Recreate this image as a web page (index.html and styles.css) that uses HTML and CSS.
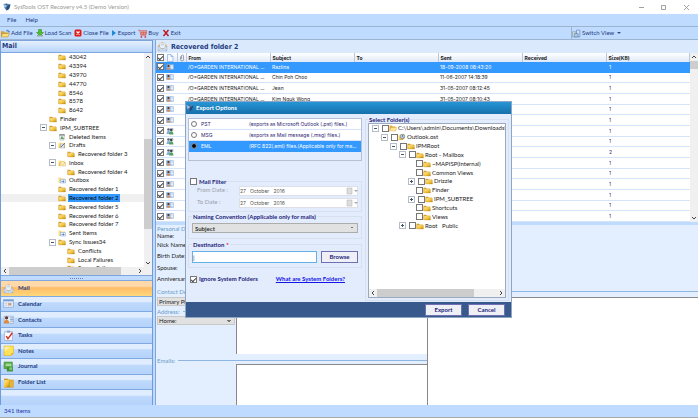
FILE: index.html
```html
<!DOCTYPE html>
<html lang="en">
<head>
<meta charset="utf-8">
<title>SysTools OST Recovery v4.5 (Demo Version)</title>
<link rel="stylesheet" href="styles.css">
</head>
<body>
<svg width="0" height="0" class="defs" aria-hidden="true">
  <defs>
    <linearGradient id="gold" x1="0" y1="0" x2="1" y2="1"><stop offset="0" stop-color="#fff0a0"/><stop offset=".55" stop-color="#f3c43c"/><stop offset="1" stop-color="#b98212"/></linearGradient>
    <linearGradient id="blue" x1="0" y1="0" x2="1" y2="0"><stop offset="0" stop-color="#7fa6d8"/><stop offset="1" stop-color="#d3e4f8"/></linearGradient>
    <symbol id="folder" viewBox="0 0 16 14"><path d="M1 2.5h5l1.5 2H14v8.500H1z" fill="#d9a02a"/><path d="M2 5h12.500l.5 8H2z" fill="url(#gold)" stroke="#c4912a" stroke-width=".6"/></symbol>
    <symbol id="open" viewBox="0 0 16 14"><path d="M1 2h5l1.500 2H13v9H1z" fill="#e3ae3c"/><path d="M4 6h12l-3 7H1z" fill="#ffe696" stroke="#c4912a" stroke-width=".6"/></symbol>
    <symbol id="addfile" viewBox="0 0 16 14"><path d="M0 3h5l1.500 2H12v8H0z" fill="#d9a02a"/><path d="M3 7h12l-3 6H0z" fill="#ffe07a" stroke="#a87518" stroke-width=".8"/><path d="M9 3c2-3 5-2 5 1M12 3l2 2 2-2" fill="none" stroke="#2d5fae" stroke-width="1.400"/></symbol>
    <symbol id="trash" viewBox="0 0 16 14"><path d="M3 2h10l-1 11H4z" fill="#f4f8f4" stroke="#8a968c"/><path d="M3 3h10" stroke="#444" stroke-width="1.500"/><path d="M6 10l2-4 3 4z" fill="none" stroke="#2f8a3f" stroke-width="1.500"/></symbol>
    <symbol id="drafts" viewBox="0 0 16 14"><path d="M1 2h5l1 2h7v9H1z" fill="url(#gold)"/><path d="M5 5h8v8H5z" fill="#dce6f6" stroke="#7a8db0" stroke-width=".7"/><path d="M6 11l8-8" stroke="#5a5348" stroke-width="1.500"/></symbol>
    <symbol id="store" viewBox="0 0 16 14"><path d="M1 4l4-3h8v8l-4 4H1z" fill="url(#gold)"/><circle cx="9" cy="6" r="4.500" fill="#b8cde8" stroke="#4f6d96"/><path d="M9 3v3l2 2" fill="none" stroke="#333"/></symbol>
    <symbol id="inbox" viewBox="0 0 16 14"><path d="M1 2h5l1 2h7v9H1z" fill="url(#gold)"/><path d="M4 7l5-3 6 3v6H4z" fill="#fff3c4" stroke="#c79b3d" stroke-width=".7"/><path d="M4 7l5 4 6-4" fill="none" stroke="#c79b3d" stroke-width=".8"/></symbol>
    <symbol id="outbox" viewBox="0 0 16 14"><path d="M1 2h5l1 2h7v9H1z" fill="#f7dd87"/><path d="M5 6h10v7H5z" fill="#e8f1ff" stroke="#6b8fc6" stroke-width=".8"/><path d="M7 10h5M10 8l2.500 2-2.500 2" fill="none" stroke="#2b66b8" stroke-width="1.200"/></symbol>
    <symbol id="contact" viewBox="0 0 16 12"><path d="M1 1h14v10H1z" fill="url(#blue)" stroke="#7d9cc8" stroke-width=".8"/><circle cx="5" cy="4" r="2.200" fill="#5a2d1a"/><path d="M2 11c0-5 6.500-5 6.500 0z" fill="#d98a45"/><path d="M10 4h4M10 7h4" stroke="#fff" stroke-width="1.300"/></symbol>
    <symbol id="group" viewBox="0 0 16 14"><circle cx="5" cy="4" r="2.600" fill="#55627c"/><path d="M1 13c0-9 8-9 8 0z" fill="#8ab0d5"/><circle cx="10.500" cy="5" r="2.600" fill="#3c4152"/><path d="M6 14c0-9 9-9 9 0z" fill="#55a068"/><path d="M8 2h6v4" fill="none" stroke="#777f90"/></symbol>
    <symbol id="mail" viewBox="0 0 20 20"><path d="M2 8l8-6 8 6v10H2z" fill="#f2a93f"/><path d="M5 4h10v9H5z" fill="#fff" stroke="#a9bbd1" stroke-width=".7"/><path d="M6.500 6.500h7M6.500 9h7" stroke="#8fb0d8"/><path d="M2 9l8 6 8-6v9H2z" fill="#d6e5f6" stroke="#8aa4c2" stroke-width=".8"/><path d="M2 18l6-5M18 18l-6-5" stroke="#8aa4c2" stroke-width=".8"/></symbol>
    <symbol id="gem" viewBox="0 0 16 16"><path d="M1 2l6-1 8 2-3 9-5 3-4-5z" fill="#4d7db5"/><path d="M7 1l2 5 6-3-3 9-5 3z" fill="#254a77"/><path d="M1 2l8 4-6 4z" fill="#9fc2e0"/></symbol>
  </defs>
</svg>

<div class="window">
  <header class="titlebar">
    <svg class="i8"><use href="#gem"/></svg>
    <span class="caption">SysTools OST Recovery v4.5 (Demo Version)</span>
    <svg class="winbtns" viewBox="0 0 54 8"><path d="M1 4.500h5M23.500 2.500h4v4h-4zM46 2l5 5M51 2l-5 5" fill="none" stroke="#888" stroke-width=".8"/></svg>
  </header>
  <nav class="menubar"><a href="#">File</a><a href="#">Help</a></nav>
  <div class="toolbar">
    <button><svg class="i9"><use href="#addfile"/></svg>Add File</button>
    <button><svg class="i8" viewBox="0 0 16 16"><path d="M5 1h6v6h4L8 14 1 7h4z" fill="#4fc02c" stroke="#278016"/><path d="M2 12h12v3H2z" fill="#9aa79a"/></svg>Load Scan</button>
    <button><svg class="i8" viewBox="0 0 16 16"><rect x="1" y="1" width="14" height="14" rx="3" fill="#e01818"/><path d="M5 5l6 6M11 5l-6 6" stroke="#fff" stroke-width="2.500"/></svg>Close File</button>
    <button><svg class="play" viewBox="0 0 5 8"><path d="M0 1l4 3-4 3z" fill="#2187d8"/></svg>Export</button>
    <button><svg class="i9" viewBox="0 0 16 16"><path d="M0 2h3l2 9h9l2-8H4M5 6h10M5 9h9M7 4v7M10 4v7M13 4v7" fill="none" stroke="#e2553c" stroke-width="1.300"/><circle cx="6" cy="14" r="1.500" fill="#c33"/><circle cx="13" cy="14" r="1.500" fill="#c33"/></svg>Buy</button>
    <button><svg class="i8" viewBox="0 0 16 16"><path d="M3 2l10 12M13 2L3 14" stroke="#c01414" stroke-width="2.800"/></svg>Exit</button>
    <div class="switch"><button><svg class="i9" viewBox="0 0 16 16"><path d="M1 5h6v9H1z" fill="#d6e8e0" stroke="#6a8a9a"/><path d="M8 2h6v12H8z" fill="#cfe2fa" stroke="#5577a5"/><path d="M4 8h7v6H4z" fill="#a8c8e8" stroke="#5577a5"/></svg>Switch View<svg class="caret" viewBox="0 0 4 4"><path d="M0 1h4L2 3z" fill="#34508c"/></svg></button></div>
  </div>

  <main class="body">
    <aside class="left">
      <h2>Mail</h2>
      <div class="treebox">
        <ul class="tree">
          <li class="d2"><svg><use href="#folder"/></svg><span>43042</span></li>
          <li class="d2"><svg><use href="#folder"/></svg><span>43394</span></li>
          <li class="d2"><svg><use href="#folder"/></svg><span>43970</span></li>
          <li class="d2"><svg><use href="#folder"/></svg><span>44770</span></li>
          <li class="d2"><svg><use href="#folder"/></svg><span>8546</span></li>
          <li class="d2"><svg><use href="#folder"/></svg><span>8578</span></li>
          <li class="d2"><svg><use href="#folder"/></svg><span>8642</span></li>
          <li class="d1"><svg><use href="#folder"/></svg><span>Finder</span></li>
          <li class="d1 minus"><svg><use href="#folder"/></svg><span>IPM_SUBTREE</span></li>
          <li class="d2"><svg><use href="#trash"/></svg><span>Deleted Items</span></li>
          <li class="d2 minus"><svg><use href="#drafts"/></svg><span>Drafts</span></li>
          <li class="d3"><svg><use href="#folder"/></svg><span>Recovered folder 3</span></li>
          <li class="d2 minus"><svg><use href="#inbox"/></svg><span>Inbox</span></li>
          <li class="d3"><svg><use href="#folder"/></svg><span>Recovered folder 4</span></li>
          <li class="d2"><svg><use href="#outbox"/></svg><span>Outbox</span></li>
          <li class="d2"><svg><use href="#folder"/></svg><span>Recovered folder 1</span></li>
          <li class="d2 current"><svg><use href="#folder"/></svg><span>Recovered folder 2</span></li>
          <li class="d2"><svg><use href="#folder"/></svg><span>Recovered folder 5</span></li>
          <li class="d2"><svg><use href="#folder"/></svg><span>Recovered folder 6</span></li>
          <li class="d2"><svg><use href="#folder"/></svg><span>Recovered folder 7</span></li>
          <li class="d2"><svg><use href="#outbox"/></svg><span>Sent Items</span></li>
          <li class="d2 minus"><svg><use href="#folder"/></svg><span>Sync Issues34</span></li>
          <li class="d3"><svg><use href="#folder"/></svg><span>Conflicts</span></li>
          <li class="d3"><svg><use href="#folder"/></svg><span>Local Failures</span></li>
          <li class="d3"><svg><use href="#folder"/></svg><span>Server Failures</span></li>
        </ul>
        <div class="vbar"><svg viewBox="0 0 8 8"><path d="M2 5l2-2 2 2" /></svg><i class="gap"></i><i class="thumb"></i><i class="gap2"></i><svg viewBox="0 0 8 8"><path d="M2 3l2 2 2-2"/></svg></div>
        <div class="hbar"><svg viewBox="0 0 8 8"><path d="M5 2L3 4l2 2"/></svg><i class="thumb"></i><i class="gap"></i><svg viewBox="0 0 8 8"><path d="M3 2l2 2-2 2"/></svg></div>
      </div>
      <div class="splitter"><i></i></div>
      <nav class="panes">
        <a href="#" class="active"><svg><use href="#mail"/></svg>Mail</a>
        <a href="#"><svg viewBox="0 0 20 20"><path d="M1 3h18v14H1z" fill="#f3f7fd" stroke="#6d91c6"/><path d="M1 3h18v3H1z" fill="#6f9bd8"/><path d="M1 9.500h18M1 13h18M5.500 6v11M10 6v11M14.500 6v11" stroke="#a9bedd"/><path d="M10 9.500h4.500V13H10z" fill="#e58b4a"/></svg>Calendar</a>
        <a href="#"><svg viewBox="0 0 20 20"><path d="M2 4h17v13H2z" fill="#e4edf9" stroke="#7f9cc8"/><circle cx="6.500" cy="7" r="3" fill="#6a3420"/><path d="M1.500 17c0-9 10-9 10 0z" fill="#e08a3c"/><path d="M13 7h5M13 10h5M13 13h5" stroke="#6288bf" stroke-width="1.300"/></svg>Contacts</a>
        <a href="#"><svg viewBox="0 0 20 20"><path d="M3 3h14v16H3z" fill="#fff" stroke="#7d93b5"/><path d="M7 1h6v4H7z" fill="#8da5c8"/><path d="M6 11l3 5 8-11" fill="none" stroke="#d92c1c" stroke-width="2.600"/></svg>Tasks</a>
        <a href="#"><svg viewBox="0 0 20 20"><path d="M2 2h17v13l-4 4H2z" fill="#ffe25a" stroke="#d8ab20"/><path d="M15 19v-4h4z" fill="#d9a91f"/><path d="M3 3h10L3 12z" fill="#fff3a6"/></svg>Notes</a>
        <a href="#"><svg viewBox="0 0 20 20"><path d="M2 2h15v12H2z" fill="#5fb04c" stroke="#35782c"/><path d="M5 5h10v4H5z" fill="#a9dc98"/><path d="M7 11h11v8H7z" fill="#3f8e3a"/><circle cx="14" cy="14" r="3" fill="#7fc46c"/></svg>Journal</a>
        <a href="#"><svg viewBox="0 0 20 20"><path d="M2 3h7l2 2h8v14H2z" fill="#c28a18"/><path d="M2 6l10-2v13L2 19z" fill="url(#gold)"/><path d="M12 6h7v12h-7z" fill="#e8b437"/></svg>Folder List</a>
        <div></div>
      </nav>
    </aside>

    <section class="right">
      <h1><svg><use href="#mail"/></svg>Recovered folder 2</h1>
      <div class="gridwrap">
        <table>
          <colgroup><col class="c-chk"><col class="c-doc"><col class="c-clip"><col class="c-std"><col class="c-std"><col class="c-std"><col class="c-std"><col class="c-std"><col></colgroup>
          <thead><tr><th><input type="checkbox" checked aria-label="Select all"></th><th><svg class="i8" viewBox="0 0 16 16"><path d="M3 1h7l4 4v10H3z" fill="#f4f9ff" stroke="#5b8ed0"/><path d="M10 1v4h4" fill="none" stroke="#5b8ed0"/></svg></th><th><svg class="i8" viewBox="0 0 16 16"><path d="M5 5v6a3 3 0 006 0V4a2 2 0 00-4 0v6" fill="none" stroke="#777f8c" stroke-width="1.400"/></svg></th><th>From</th><th>Subject</th><th>To</th><th>Sent</th><th>Received</th><th>Size(KB)</th></tr></thead>
          <tbody>
            <tr class="sel"><td><input type="checkbox" checked aria-label="Row 1"></td><td><svg class="i8"><use href="#contact"/></svg></td><td></td><td>/O=GARDEN INTERNATIONAL ...</td><td>Razlina</td><td></td><td>18-09-2008 08:43:20</td><td></td><td>1</td></tr>
            <tr><td><input type="checkbox" checked aria-label="Row 2"></td><td><svg class="i8"><use href="#contact"/></svg></td><td></td><td>/O=GARDEN INTERNATIONAL ...</td><td>Chin Poh Choo</td><td></td><td>11-06-2007 14:18:39</td><td></td><td>1</td></tr>
            <tr><td><input type="checkbox" checked aria-label="Row 3"></td><td><svg class="i8"><use href="#contact"/></svg></td><td></td><td>/O=GARDEN INTERNATIONAL ...</td><td>Jean</td><td></td><td>31-05-2007 08:12:45</td><td></td><td>1</td></tr>
            <tr><td><input type="checkbox" checked aria-label="Row 4"></td><td><svg class="i8"><use href="#contact"/></svg></td><td></td><td>/O=GARDEN INTERNATIONAL ...</td><td>Kim Nguk Wong</td><td></td><td>31-05-2007 08:10:43</td><td></td><td>1</td></tr>
            <tr><td><input type="checkbox" checked aria-label="Row 5"></td><td><svg class="i8"><use href="#contact"/></svg></td><td></td><td></td><td></td><td></td><td></td><td></td><td>1</td></tr>
            <tr><td><input type="checkbox" checked aria-label="Row 6"></td><td><svg class="i8"><use href="#contact"/></svg></td><td></td><td></td><td></td><td></td><td></td><td></td><td>1</td></tr>
            <tr><td><input type="checkbox" checked aria-label="Row 7"></td><td><svg class="i8"><use href="#group"/></svg></td><td></td><td></td><td></td><td></td><td></td><td></td><td>1</td></tr>
            <tr><td><input type="checkbox" checked aria-label="Row 8"></td><td><svg class="i8"><use href="#group"/></svg></td><td></td><td></td><td></td><td></td><td></td><td></td><td>1</td></tr>
            <tr><td><input type="checkbox" checked aria-label="Row 9"></td><td><svg class="i8"><use href="#group"/></svg></td><td></td><td></td><td></td><td></td><td></td><td></td><td>2</td></tr>
            <tr><td><input type="checkbox" checked aria-label="Row 10"></td><td><svg class="i8"><use href="#contact"/></svg></td><td></td><td></td><td></td><td></td><td></td><td></td><td>1</td></tr>
            <tr><td><input type="checkbox" checked aria-label="Row 11"></td><td><svg class="i8"><use href="#contact"/></svg></td><td></td><td></td><td></td><td></td><td></td><td></td><td>1</td></tr>
            <tr><td><input type="checkbox" checked aria-label="Row 12"></td><td><svg class="i8"><use href="#contact"/></svg></td><td></td><td></td><td></td><td></td><td></td><td></td><td>1</td></tr>
            <tr><td><input type="checkbox" checked aria-label="Row 13"></td><td><svg class="i8"><use href="#contact"/></svg></td><td></td><td></td><td></td><td></td><td></td><td></td><td>1</td></tr>
            <tr><td><input type="checkbox" checked aria-label="Row 14"></td><td><svg class="i8"><use href="#contact"/></svg></td><td></td><td></td><td></td><td></td><td></td><td></td><td>1</td></tr>
            <tr><td><input type="checkbox" checked aria-label="Row 15"></td><td><svg class="i8"><use href="#contact"/></svg></td><td></td><td></td><td></td><td></td><td></td><td></td><td>1</td></tr>
          </tbody>
        </table>
        <div class="vbar"><svg viewBox="0 0 8 8"><path d="M2 5l2-2 2 2"/></svg><i class="thumb"></i><i class="gap"></i><svg viewBox="0 0 8 8"><path d="M2 3l2 2 2-2"/></svg></div>
      </div>
      <div class="details">
        <div class="personal">
          <h3>Personal Details</h3>
          <p>Name:</p><p>Nick Name:</p><p>Birth Date:</p><p>Spouse:</p><p>Anniversary:</p>
        </div>
        <h3 class="rule">Contact Details</h3>
        <div class="lower">
          <div class="fields">
            <div class="phone"><select aria-label="Phone type"><option>Primary Phone</option></select></div>
            <h3 class="rule">Address:</h3>
            <div class="pair"><select aria-label="Address type"><option>Home:</option></select><textarea aria-label="Address"></textarea></div>
            <h3 class="rule emails">Emails:</h3>
            <div class="pair mails"><span></span><textarea aria-label="Emails"></textarea></div>
          </div>
          <textarea class="notes" aria-label="Notes"></textarea>
        </div>
      </div>
    </section>
  </main>
  <footer class="status">341 Items</footer>
</div>

<section class="dialog" role="dialog" aria-label="Export Options">
  <header><svg class="i8"><use href="#gem"/></svg>Export Options</header>
  <div class="dbody">
    <div class="dleft">
      <div class="formats">
        <label><input type="radio" name="fmt"><b>PST</b><span>(exports as Microsoft Outlook (.pst) files.)</span></label>
        <label><input type="radio" name="fmt"><b>MSG</b><span>(exports as Mail message (.msg) files.)</span></label>
        <label class="on"><input type="radio" name="fmt" checked><b>EML</b><span>(RFC 822(.eml) files.(Applicable only for ma...</span></label>
      </div>
      <fieldset class="filter">
        <legend><label><input type="checkbox">Mail Filter</label></legend>
        <div class="date"><label for="from">From Date :</label><input id="from" value="27   October   2016" disabled><svg viewBox="0 0 12 8"><path d="M1 1h5v6H1z" fill="#ddd" stroke="#bbb" stroke-width=".6"/><path d="M8 3h4l-2 2z" fill="#aaa"/></svg></div>
        <div class="date"><label for="to">To Date :</label><input id="to" value="27   October   2016" disabled><svg viewBox="0 0 12 8"><path d="M1 1h5v6H1z" fill="#ddd" stroke="#bbb" stroke-width=".6"/><path d="M8 3h4l-2 2z" fill="#aaa"/></svg></div>
      </fieldset>
      <fieldset class="naming">
        <legend><label for="conv">Naming Convention (Applicable only for mails)</label></legend>
        <select id="conv"><option>Subject</option></select>
      </fieldset>
      <fieldset class="dest">
        <legend><label for="dest">Destination <em>*</em></label></legend>
        <div><input id="dest" value="|"><button>Browse</button></div>
      </fieldset>
      <div class="ignore"><label><input type="checkbox" checked>Ignore System Folders</label><a href="#">What are System Folders?</a></div>
    </div>
    <fieldset class="dright">
      <legend>Select Folder(s)</legend>
      <div class="ftree">
        <ul>
          <li class="f0 minus"><label><input type="checkbox"><svg><use href="#open"/></svg>C:\Users\admin\Documents\Downloads\</label></li>
          <li class="f1 minus"><label><input type="checkbox"><svg><use href="#store"/></svg>Outlook.ost</label></li>
          <li class="f2 minus"><label><input type="checkbox"><svg><use href="#folder"/></svg>IPMRoot</label></li>
          <li class="f3 minus"><label><input type="checkbox"><svg><use href="#folder"/></svg>Root - Mailbox</label></li>
          <li class="f4"><label><input type="checkbox"><svg><use href="#folder"/></svg>~MAPISP(Internal)</label></li>
          <li class="f4"><label><input type="checkbox"><svg><use href="#folder"/></svg>Common Views</label></li>
          <li class="f4 plus"><label><input type="checkbox"><svg><use href="#folder"/></svg>Drizzle</label></li>
          <li class="f4"><label><input type="checkbox"><svg><use href="#folder"/></svg>Finder</label></li>
          <li class="f4 plus"><label><input type="checkbox"><svg><use href="#folder"/></svg>IPM_SUBTREE</label></li>
          <li class="f4"><label><input type="checkbox"><svg><use href="#folder"/></svg>Shortcuts</label></li>
          <li class="f4"><label><input type="checkbox"><svg><use href="#folder"/></svg>Views</label></li>
          <li class="f3 plus"><label><input type="checkbox"><svg><use href="#folder"/></svg>Root &nbsp; Public</label></li>
        </ul>
        <div class="hbar"><svg viewBox="0 0 8 8"><path d="M5 2L3 4l2 2"/></svg><i class="thumb"></i><i class="gap"></i><svg viewBox="0 0 8 8"><path d="M3 2l2 2-2 2"/></svg></div>
      </div>
    </fieldset>
  </div>
  <footer><button>Export</button><button>Cancel</button></footer>
</section>
</body>
</html>
```
FILE: styles.css
```css
*{box-sizing:border-box}
html,body{height:100%}
body{margin:0;font:6px/8px Lato,"Open Sans",sans-serif;color:#222;background:#fff;overflow:hidden}
button,input,select,textarea{font:inherit;color:inherit;margin:0;padding:0;border-radius:0}
button{background:none;border:0;white-space:nowrap}
h1,h2,h3,p,ul{margin:0;padding:0}
ul{list-style:none}
a{color:inherit;text-decoration:none}
fieldset{margin:0;padding:0;min-width:0;border:1px solid #d6e0ee}
svg{display:block;flex:none}
.defs{position:absolute}
.i8{width:8px;height:8px}
.i9{width:9px;height:9px}
.play{width:5px;height:8px}

input[type=checkbox]{appearance:none;flex:none;display:grid;place-items:center;width:7px;height:7px;border:1px solid #777;background:#fff}
input[type=checkbox]:checked::after{content:"";width:4px;height:2px;border:solid #444;border-width:0 0 1px 1px;transform:rotate(-45deg)}

/* window frame */
.window{display:flex;flex-direction:column;height:100vh;background:#bfdbff}
.titlebar{display:flex;align-items:center;gap:3px;height:14px;padding:0 6px 0 3px;background:#fff;color:#999}
.caption{flex:1}
.winbtns{width:54px;height:8px}
.menubar{display:flex;gap:9px;height:12px;padding:2px 7px;color:#1e3c80}
.toolbar{display:flex;align-items:center;gap:3px;height:14px;padding-left:1px;border:solid #9db4d0;border-width:1px 0;color:#1e3c80}
.toolbar button{display:flex;align-items:center;gap:1px}
.switch{display:flex;align-items:center;width:127px;height:12px;margin-left:auto;border-left:1px solid #9db4d0}
.caret{width:4px;height:4px;margin-left:2px}
.body{flex:1;min-height:0;display:grid;grid-template-columns:153px minmax(0,1fr);gap:2px}
.status{height:13px;padding:2px 4px;border-bottom:1px solid #aaa;color:#2233a8}

/* scroll bars */
.vbar,.hbar{display:flex;background:#f0f0f0}
.vbar{flex-direction:column}
.vbar svg,.hbar svg{width:8px;height:8px;fill:none;stroke:#444;stroke-width:1}
.thumb{background:#cdcdcd}

/* navigation */
.left{display:flex;flex-direction:column;min-height:0;border:solid #6f9bd8;border-width:0 1px}
.left h2{height:13px;padding-left:1px;border:solid #7fa5dd;border-width:1px 0;background:linear-gradient(#e6f0fe,#b9d5fb);font:bold 7px/11px "DejaVu Sans Condensed",sans-serif;color:#1e3c80}
.treebox{flex:1;min-height:0;display:grid;grid-template:minmax(0,1fr) 8px / minmax(0,1fr) 8px;background:#fff}
.treebox .hbar{grid-column:1 / -1;padding-right:8px}
.treebox .hbar .thumb{width:112px}
.gap{flex:1}
.treebox .gap{flex:78}
.treebox .vbar .thumb{flex:90}
.gap2{flex:30}
.treebox .hbar .gap{flex:1}
.tree{display:grid;grid-template-rows:repeat(24,minmax(0,1fr));grid-auto-rows:3px;overflow:hidden}
.tree li{display:flex;align-items:center;gap:2px;min-height:0;overflow:hidden}
.tree li:last-child{align-items:flex-start}
.tree svg{width:8px;height:8px}
.tree span{padding:0 1px}
.d1{padding-left:48px}
.d2{padding-left:57px}
.d3{padding-left:66px}
.minus::before,.plus::before{content:"";flex:none;width:5px;height:5px;margin-left:-9px;margin-right:2px;border:1px solid #b4bcc8;background:linear-gradient(#456,#456) center/3px 1px no-repeat}
.plus::before{background:linear-gradient(#456,#456) center/3px 1px no-repeat,linear-gradient(#456,#456) center/1px 3px no-repeat}
.tree .minus::before{margin-right:0}
.current{background:#f0f0f0}
.current span{background:#3399ff;color:#000}
.splitter{display:grid;place-items:center;height:5px;border-top:1px solid #7fa5dd}
.splitter i{width:13px;border-top:1px dotted #5f82b8}
.panes{display:grid;grid-template-rows:repeat(8,1fr);height:125px;color:#1e3c80;font-weight:bold}
.panes>*{display:flex;align-items:center;gap:4px;padding-left:2px;border-top:1px solid #7fa9e0;background:linear-gradient(#e0edff 0 35%,#c0dafc 40%,#b4d2fb)}
.panes .active{background:linear-gradient(#ffd9aa 0 35%,#ffbd69 45%,#ffd77a)}
.panes svg{width:11px;height:11px}

/* message list */
.right{display:flex;flex-direction:column;min-height:0;border-left:1px solid #7fa5dd;background:#e3efff}
.right h1{display:flex;align-items:center;gap:3px;height:13px;padding-left:1px;background:#dbe9fc;font:bold 7px/12px "DejaVu Sans Condensed",sans-serif;color:#1e3c80}
.right h1 svg{width:11px;height:11px}
.gridwrap{display:grid;grid-template-columns:minmax(0,1fr) 8px;flex:none;background:#fff}
.gridwrap .thumb{height:8px}
table{width:100%;height:169px;table-layout:fixed;border-collapse:collapse;font:5px/6px Inter,"Open Sans",sans-serif}
.c-chk{width:9px}
.c-doc{width:12px}
.c-clip{width:9px}
.c-std{width:84px}
th,td{padding:0 0 0 2px;text-align:left;white-space:nowrap;overflow:hidden}
tr>:first-child{padding-left:1px}
tr>:nth-child(2){padding-left:1px}
tr>:nth-child(3){padding-left:0}
thead tr{height:9px;background:linear-gradient(#fff,#dfe9f7)}
th{border-right:1px solid #b9c8dc}
th:first-child,td:first-child{border-right:0}
tbody td{border-bottom:1px solid #d5e4fa}
.sel td{background:#3399ff;color:#fff;border-color:#3399ff}
td:last-child{padding-left:3px;color:#3c3474}
.sel td:last-child{color:#fff}

/* record details */
.details{flex:1;display:flex;flex-direction:column;min-height:0;border-top:3px solid #bfdbff;padding-left:1px}
.personal{display:flex;flex-direction:column;height:62px;padding-bottom:2px}
.personal p{flex:1;display:flex;align-items:center}
.personal p:nth-of-type(1){flex:none;height:7px}
.details h3{font-size:6px;font-weight:normal;color:#6a9bc8;line-height:7px}
.rule{display:flex;align-items:center;gap:3px;height:8px}
.rule::after{content:"";flex:1;height:1px;background:#8fb6e0}
.lower{flex:1;min-height:0;display:grid;grid-template-columns:270px minmax(0,1fr);padding-top:2px}
.fields{display:flex;flex-direction:column;min-height:0}
.phone{height:10px}
.details select{width:78px;height:9px}
select{appearance:none;padding:0 8px 0 1px;border:1px solid #c8c8c8;background:linear-gradient(45deg,transparent 50%,#777 50%) right 5px center/2px 2px no-repeat,linear-gradient(-45deg,transparent 50%,#777 50%) right 3px center/2px 2px no-repeat,#e1e1e1;line-height:7px}
.fields .rule{flex:none;margin-bottom:1px}
.fields .emails{margin:2px 0 0}
.pair{flex:3;display:grid;grid-template-columns:79px minmax(0,1fr)}
.mails{flex:none;height:41px}
textarea{display:block;width:100%;height:100%;border:solid #888;border-width:1px 0 0 1px;background:#fff;resize:none}

/* export dialog */
.dialog{position:absolute;left:185px;top:101px;width:327px;border:1px solid #8ea5c4;background:#e3ecfd;font-size:6px}
.dialog>header{display:flex;align-items:center;gap:2px;height:12px;background:linear-gradient(#2596d6,#1670ab);color:#fff;font-weight:bold}
.dbody{display:grid;grid-template-columns:minmax(0,1fr) 144px;gap:3px;height:188px;padding:2px}
.dleft{display:flex;flex-direction:column}
.formats{height:43px;margin-top:2px;border:1px solid #b4c0d4;background:linear-gradient(#fff 0 32px,#e3ecfd 32px);font:5px/10px Inter,"Open Sans",sans-serif;color:#2b2472}
.formats label{display:flex;align-items:center;height:11px;padding-left:2px;border-bottom:1px solid #d5e4fa;white-space:nowrap}
.formats b{width:48px;margin-left:4px;font-weight:normal}
.formats .on{background:#3399ff;border-color:#3399ff;color:#fff}
input[type=radio]{appearance:none;display:grid;place-items:center;width:6px;height:6px;margin:0;border:1px solid #777;border-radius:50%;background:#fff}
input[type=radio]:checked::after{content:"";width:4px;height:4px;border-radius:50%;background:#000}
.dialog legend{padding:0 1px;font-weight:bold;color:#1e1e78;line-height:7px}
.dialog legend label,.ignore label{display:flex;align-items:center;gap:2px}
.dleft fieldset{padding:0 3px}
.filter{height:34px;margin-top:17px}
.dialog .filter legend{margin-left:-3px}
.date{display:grid;grid-template-columns:47px minmax(0,1fr);height:10px;margin-top:1px;margin-bottom:2px;color:#9aa0ac}
.date label{padding-left:5px}
.date input,.date svg{grid-row:1}
.date input{grid-column:2;border:1px solid #dde0e6;background:#fff;color:#555;white-space:pre;font:5px/8px Inter,sans-serif}
.date svg{grid-column:2;justify-self:end;align-self:center;width:12px;height:8px}
.naming{height:26px;margin-top:1px}
.naming select{display:block;width:100%;height:10px;margin-top:3px;padding-left:2px;font-weight:bold;color:#333;border-color:#adadad}
.dest{height:27px;margin-top:2px}
.dest em{color:#e00000;font-style:normal}
.dest div{display:flex;gap:4px;margin-top:3px}
.dest input{flex:1;min-width:0;height:12px;border:1px solid #66b0ea;background:#fff}
.dest button{width:37px;height:12px}
.dialog button{border:1px solid #6f6fb4;background:#efeff6;color:#1e1e78;font-weight:bold;line-height:8px}
.ignore{display:flex;align-items:center;gap:18px;margin:7px 3px 0 2px;color:#1e1e78;font-weight:bold}
.ignore a{color:#1414e6;text-decoration:underline}
.dright{display:flex;flex-direction:column}
.dialog .dright legend{margin-left:2px}
.ftree{display:flex;flex-direction:column;height:175px;margin:0 2px 2px 2px;border:1px solid #9ba9bf;background:#fff;overflow:hidden}
.ftree ul{display:grid;grid-template-rows:repeat(12,1fr);height:106px;margin-bottom:auto}
.ftree li{display:flex;align-items:center;min-height:0;white-space:nowrap}
.ftree label{display:flex;align-items:center}
.ftree ul svg{width:8px;height:8px;margin-right:1px}
.f0{padding-left:11px}
.f1{padding-left:20px}
.f2{padding-left:29px}
.f3{padding-left:38px}
.f4{padding-left:47px}
.ftree .minus::before,.ftree .plus::before{margin-left:-8px;margin-right:3px}
.ftree .thumb{flex:97}
.ftree .gap{flex:23}
.dialog>footer{display:flex;justify-content:flex-end;align-items:center;gap:6px;height:15px;padding-right:6px;background:#38598c}
.dialog>footer button{width:37px;height:12px}
```
